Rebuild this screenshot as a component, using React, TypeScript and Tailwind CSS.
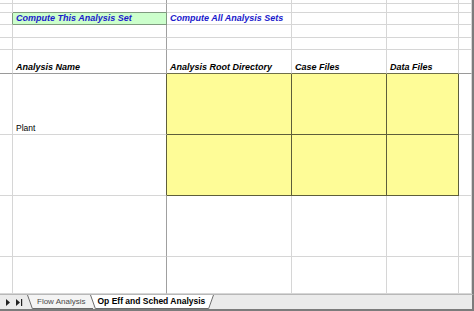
const line = "border-[#d6d6d6]";

const Cell = ({ className = "", children }: { className?: string; children?: React.ReactNode }) => (
  <div className={`box-border border-r border-b overflow-hidden whitespace-nowrap ${className}`}>{children}</div>
);

const Slant = ({ dir, fill }: { dir: "l" | "r"; fill: string }) => (
  <svg width="6" height="14" className="block shrink-0">
    {dir === "l" ? (
      <>
        <polygon points="0,0 6,0 6,14 5,14" fill={fill} />
        <line x1="0.5" y1="0" x2="5.5" y2="14" stroke="#6b6b6b" strokeWidth="1" />
      </>
    ) : (
      <>
        <polygon points="0,0 6,0 1,14 0,14" fill={fill} />
        <line x1="5.5" y1="0" x2="0.5" y2="14" stroke="#6b6b6b" strokeWidth="1" />
      </>
    )}
  </svg>
);

const App = () => {
  const head = "font-bold italic text-[9px] leading-none text-black flex items-end pl-[3px] pb-[1px]";
  const yellow = "bg-[#fefc97] border-[#5e5e3a]";
  return (
    <div className="w-[474px] h-[311px] bg-white overflow-hidden flex flex-col font-['Liberation_Sans',Arial,sans-serif]">
      <div className="flex border-r-2 border-[#7c7c7c]">
        <div className="grid grid-cols-[13px_154px_125px_95px_72px_13px] grid-rows-[4px_9px_12px_13px_12px_24px_61px_61px_61px_37px] w-[472px]">
          {/* row 0 */}
          <Cell className={line} />
          <Cell className="border-[#a0a0a0] border-b-[#d6d6d6]" />
          <Cell className={line} />
          <Cell className={line} />
          <Cell className={line} />
          <Cell className={line} />
          {/* row 1 */}
          <Cell className={line} />
          <Cell className="border-[#a0a0a0] border-b-[#7f9a7f]" />
          <Cell className={line} />
          <Cell className={line} />
          <Cell className={line} />
          <Cell className={line} />
          {/* row 2 - compute */}
          <Cell className={`${line} border-r-[#7f9a7f]`} />
          <Cell className="bg-[#ccffcc] border-[#7f9a7f] flex items-center pl-[3px] text-[9px] font-bold italic text-[#1a1acc] leading-none">
            Compute This Analysis Set
          </Cell>
          <Cell className={`${line} flex items-center pl-[3px] text-[9px] font-bold italic text-[#1a1acc] leading-none`}>
            Compute All Analysis Sets
          </Cell>
          <Cell className={line} />
          <Cell className={line} />
          <Cell className={line} />
          {/* row 3 */}
          <Cell className={line} />
          <Cell className="border-[#a0a0a0] border-b-[#d6d6d6]" />
          <Cell className={line} />
          <Cell className={line} />
          <Cell className={line} />
          <Cell className={line} />
          {/* row 4 */}
          <Cell className={line} />
          <Cell className="border-[#a0a0a0] border-b-[#d6d6d6]" />
          <Cell className={line} />
          <Cell className={line} />
          <Cell className={line} />
          <Cell className={line} />
          {/* header row */}
          <Cell className="border-[#d6d6d6] border-b-[#9a9a9a]" />
          <Cell className={`border-[#a0a0a0] border-b-[#9a9a9a] ${head}`}>Analysis Name</Cell>
          <Cell className={`border-[#d6d6d6] border-b-[#6e6e4a] ${head}`}>Analysis Root Directory</Cell>
          <Cell className={`border-[#d6d6d6] border-b-[#6e6e4a] ${head}`}>Case Files</Cell>
          <Cell className={`border-[#d6d6d6] border-b-[#6e6e4a] ${head}`}>Data Files</Cell>
          <Cell className="border-[#d6d6d6] border-b-[#9a9a9a]" />
          {/* yellow rows */}
          <Cell className={line} />
          <Cell className="border-[#5e5e3a] border-b-[#d6d6d6] flex items-end pl-[3px] pb-[2px] text-[8.5px] leading-none text-black">
            Plant
          </Cell>
          <Cell className={yellow} />
          <Cell className={yellow} />
          <Cell className={yellow} />
          <Cell className={line} />
          <Cell className={line} />
          <Cell className="border-[#5e5e3a] border-b-[#d6d6d6]" />
          <Cell className={yellow} />
          <Cell className={yellow} />
          <Cell className={yellow} />
          <Cell className={line} />
          {/* empty rows */}
          <Cell className={line} />
          <Cell className="border-[#a0a0a0] border-b-[#d6d6d6]" />
          <Cell className={line} />
          <Cell className={line} />
          <Cell className={line} />
          <Cell className={line} />
          <Cell className={line} />
          <Cell className="border-[#a0a0a0] border-b-[#d6d6d6]" />
          <Cell className={line} />
          <Cell className={line} />
          <Cell className={line} />
          <Cell className={line} />
        </div>
      </div>

      {/* sheet tabs */}
      <div className="flex-1 flex items-start bg-[#ebebeb] border-t border-[#b8b8b8] border-b-2 border-b-[#7c7c7c] border-r-2 border-r-[#7c7c7c]">
        <div className="w-[27px] h-[14px] flex items-center gap-[5px] pl-[5px]">
          <svg width="6" height="7" viewBox="0 0 6 7" className="block">
            <polygon points="1,0 5,3.5 1,7" fill="#222" />
          </svg>
          <svg width="7" height="7" viewBox="0 0 7 7" className="block">
            <polygon points="0,0 4,3.5 0,7" fill="#222" />
            <rect x="5" y="0" width="1.2" height="7" fill="#222" />
          </svg>
        </div>
        <div className="flex h-[14px]">
          <Slant dir="l" fill="#f4f4f4" />
          <div className="bg-[#f4f4f4] border-b border-[#6b6b6b] pl-[4px] pr-[8px] flex items-center text-[8px] leading-none text-[#4a4a4a]">
            Flow Analysis
          </div>
        </div>
        <div className="flex h-[14px] -ml-[3px]">
          <Slant dir="l" fill="#ffffff" />
          <div className="bg-white border-b border-[#6b6b6b] pl-[1px] pr-[3px] flex items-center text-[8.5px] font-bold leading-none text-black">
            Op Eff and Sched Analysis
          </div>
          <Slant dir="r" fill="#ffffff" />
        </div>
      </div>
    </div>
  );
};

export default App;
